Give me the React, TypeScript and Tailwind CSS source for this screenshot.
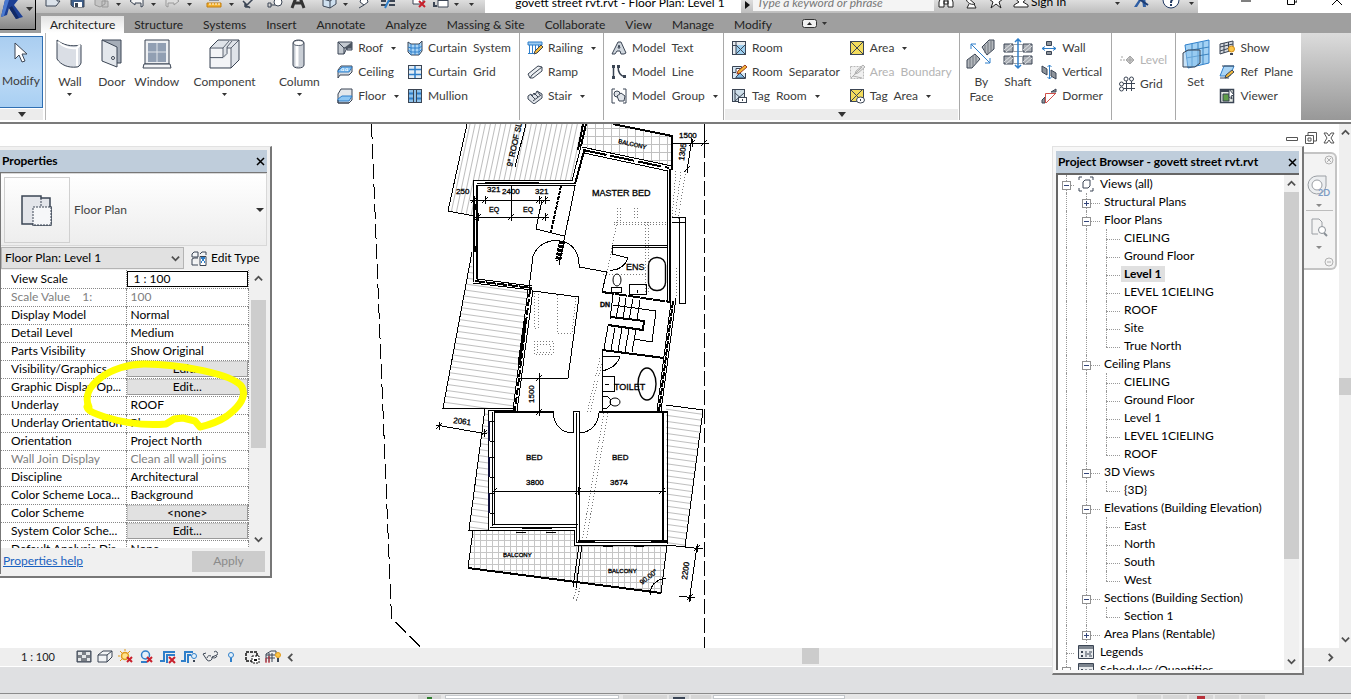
import React, { useState } from "react";

interface IconProps {
  name: string;
  size?: number;
}

const INK = "#3b4554";
const BLUE = "#2f7fca";

// 16x16 glyphs used by the small ribbon buttons and the bars
const icons: Record<string, React.ReactNode> = {
  roof: (
    <>
      <path d="M1 2h14v8H10v-2L7 14H1z" fill="#c3c9d0" stroke={INK} />
      <path d="M1 2l6 6h8M7 8v6" fill="none" stroke={INK} />
      <path d="M7 8h8V2z" fill="#4c5561" />
    </>
  ),
  ceiling: (
    <>
      <path d="M4 2h11v6l-3 3H3l-2 3V6z" fill="#d5dae0" stroke={INK} />
      <path d="M1 7l4-4h10l-3 5H1z" fill="#8ec6f2" stroke={BLUE} />
      <path d="M4 6h8M6 4v3M10 4v3" stroke="#fff" strokeDasharray="1 1" />
    </>
  ),
  floor: (
    <>
      <path d="M4 1h11v11l-3 3H1V6z" fill="#e3e7eb" stroke={INK} />
      <path d="M1 11l4-3h10l-3 5H1z" fill="#8ec6f2" stroke={BLUE} />
      <path d="M1 12v3h11l3-3" fill="none" stroke={INK} />
    </>
  ),
  curtainSystem: (
    <>
      <path d="M1 2l3 2h8l3-3v10l-3 4H4l-3-3z" fill="#a9d4f5" stroke={INK} />
      <path d="M4 4v11M12 4v11M8 4v11M1 7l3 1h8l3-2M1 10l3 2h8l3-3" fill="none" stroke={BLUE} />
    </>
  ),
  curtainGrid: (
    <>
      <rect x="1.5" y="1.5" width="13" height="13" fill="#e5edf4" stroke={INK} />
      <path d="M8 2v12M2 5.500h12M2 10.500h12" stroke={BLUE} strokeWidth="1.500" />
    </>
  ),
  mullion: (
    <>
      <rect x="1.5" y="1.5" width="13" height="13" fill="#8dc1ea" stroke={INK} />
      <path d="M6.500 1v14M9.500 1v14" stroke={INK} />
      <path d="M2 5.500h4M10 5.500h4M2 10.500h4M10 10.500h4" stroke={BLUE} strokeWidth="2" />
    </>
  ),
  railing: (
    <>
      <path d="M1 2h14v3H1z" fill="#9ccbf0" stroke={BLUE} />
      <path d="M2.500 5v8M5.500 5v8M8.500 5v8M11.500 5v3M1 13.500h6" stroke={BLUE} />
      <path d="M7 14l1-3 6-6 2 2-6 6z" fill="#f3b93a" stroke={INK} />
    </>
  ),
  ramp: (
    <>
      <path d="M1 10l10-8 4 1v4l-9 7H3z" fill="#eceff2" stroke={INK} />
      <path d="M3 14l2-3 10-8" fill="none" stroke={INK} />
    </>
  ),
  stair: (
    <>
      <path d="M1 8l3-2 1 2 2-3 1 2 2-4 5 3v4l-8 6-6-5z" fill="#dfe3e8" stroke={INK} />
      <path d="M4 7l4 4M7 5l4 4M10 3l3 4M6 13l8-6" stroke={INK} />
    </>
  ),
  modelText: (
    <>
      <path d="M1 14L7 2h3l5 11-2 1h-3l-1-3H6l-2 3z" fill="#cfd6dd" stroke={INK} />
      <path d="M7 8l1-3 1 3z" fill="#fff" stroke={INK} />
    </>
  ),
  modelLine: (
    <>
      <path d="M2.500 2v12M7 2c0 6 2 10 7 11" fill="none" stroke={INK} strokeWidth="1.500" />
      <path d="M1 1h3v3H1zM1 12h3v3H1zM6 1h3v3H6zM12 11h3v3h-3z" fill={INK} />
    </>
  ),
  modelGroup: (
    <>
      <path d="M4 1H1v14h3M12 1h3v14h-3" fill="none" stroke={INK} />
      <circle cx="6" cy="6" r="3" fill="#dfe3e8" stroke={INK} />
      <path d="M6 8l4-3 4 3-1 5H8z" fill="#dfe3e8" stroke={INK} />
    </>
  ),
  room: (
    <>
      <rect x="1.500" y="1.500" width="13" height="13" fill="#e6eaee" stroke={INK} />
      <path d="M5 5h9v9H5z" fill="#9fd0f0" />
      <path d="M5 1v13M1 5.500h4M5 5l9 9M14 5l-9 9" stroke={INK} />
    </>
  ),
  roomSeparator: (
    <>
      <path d="M1.500 2.500h9v2H5v4H1.500zM1.500 8v6.500h13V9" fill="#d6e7f4" stroke={INK} />
      <path d="M5 13l4-4 5 5H5z" fill="#7fb9e6" stroke={INK} />
      <path d="M6 10l1-3 7-6 2 2-7 6z" fill="#f3b93a" stroke="#a03a1c" />
    </>
  ),
  tagRoom: (
    <>
      <rect x="1.500" y="1.500" width="12" height="12" fill="#cfdfea" stroke={INK} />
      <path d="M4 1v12M4 5l9 8M13 5l-9 8" stroke={INK} />
      <rect x="7.500" y="9.500" width="8" height="5" fill="#fff" stroke={INK} />
      <path d="M11.500 11v2" stroke={INK} />
    </>
  ),
  area: (
    <>
      <rect x="1.500" y="1.500" width="13" height="13" fill="#f3dc5c" stroke={INK} />
      <path d="M1 1l14 14M15 1L1 15M4 1L1 4M12 15l3-3" stroke={INK} />
    </>
  ),
  areaBoundary: (
    <>
      <rect x="1.500" y="2.500" width="13" height="12" fill="#f0f0f0" stroke="#b8b8b8" strokeDasharray="2 1" />
      <path d="M2 14L13 3M6 10l1-3 7-6 2 2-7 6zM4 12l9 2" fill="#e4e4e4" stroke="#b0b0b0" />
    </>
  ),
  tagArea: (
    <>
      <rect x="1.500" y="1.500" width="13" height="12" fill="#f3dc5c" stroke={INK} />
      <path d="M1 1l13 13M14 1L1 14" stroke={INK} />
      <ellipse cx="11.500" cy="12" rx="4" ry="3" fill="#fff" stroke={INK} />
      <path d="M11.500 11v2" stroke={INK} />
    </>
  ),
  openWall: (
    <>
      <path d="M5.500 1.500h5v4h-5zM5.500 11.500h5v3h-5z" fill="#8f959c" stroke={INK} />
      <path d="M1 8.500h14M1 8.500l3-2M1 8.500l3 2M15 8.500l-3-2M15 8.500l-3 2" stroke={BLUE} />
    </>
  ),
  vertical: (
    <>
      <path d="M1 2l5 3v6L1 8zM10 6l5 3v6l-5-3z" fill="#8f959c" stroke={INK} />
      <path d="M8.500 1v14M6.500 3l2-2 2 2M6.500 13l2 2 2-2" fill="none" stroke={BLUE} />
    </>
  ),
  dormer: (
    <>
      <path d="M1 15v-3l3-3v6zM10 4l5-3v3z" fill="#8f959c" stroke={INK} />
      <path d="M4.500 15V5.500H15M5 15L14 6" fill="none" stroke="#d0504a" />
    </>
  ),
  level: (
    <>
      <path d="M1 8h6" stroke="#a5a5a5" strokeDasharray="2 1" />
      <path d="M11 4l4 4-4 4-4-4z" fill="#c9c9c9" stroke="#a5a5a5" />
      <path d="M11 4v8M7 8h8M3 4v2" stroke="#a5a5a5" />
    </>
  ),
  grid: (
    <>
      <path d="M7.500 5v10M12.500 5v10M4 7.500h12M4 12.500h12" stroke={INK} />
      <g fill="#fff" stroke={INK}>
        <circle cx="7" cy="3" r="2" />
        <circle cx="12.500" cy="3" r="2" />
        <circle cx="2.500" cy="8" r="2" />
        <circle cx="2.500" cy="13" r="2" />
      </g>
    </>
  ),
  show: (
    <>
      <path d="M1 4l13-3v9L1 14zM5 3v10M9.500 2v9M1 7l13-3M1 11l13-4" fill="#d5dae0" stroke={INK} />
      <circle cx="12.500" cy="9" r="3" fill="#fbc64a" stroke="#d08c1a" />
      <path d="M11 13h3v2h-3z" fill={INK} />
    </>
  ),
  refPlane: (
    <>
      <path d="M5 2h10l-4 10H1z" fill="#a9d4f5" stroke={BLUE} />
      <path d="M3 2h12M1 14h9" stroke={INK} />
      <path d="M6 14l1-3 6-5 2 2-6 5z" fill="#f3b93a" stroke={INK} />
    </>
  ),
  viewer: (
    <>
      <rect x="1.500" y="1.500" width="13" height="13" fill="#e8ece6" stroke={INK} strokeWidth="1.500" />
      <path d="M1 2h9v2H1z" fill={INK} />
      <path d="M4 6h6v7H4z" fill="#5f9e48" stroke={INK} />
      <path d="M10 1l5 6-3 1 1 3-3-2z" fill="#fff" stroke={INK} />
    </>
  ),
  open: <path d="M1 13V4h4l1 2h6v2h3l-4 5z" fill="#dbe2ea" stroke={INK} />,
  save: (
    <>
      <path d="M1 2h13v12H3l-2-2z" fill="#3f5f8a" stroke={INK} />
      <path d="M4 9h8v5H4z" fill="#fff" />
      <path d="M5 10h3v4H5z" fill={INK} />
    </>
  ),
  cloud: <path d="M2 12V6l5-3 5 2v6l-5 3zM9 8h6v6H9z" fill="#c5c5c5" stroke="#999" />,
  undo: <path d="M1 8l5-4v2h8v7l-2 1v-4H6v2z" fill="#f4f4f4" stroke={INK} />,
  redo: <path d="M15 8l-5-4v2H2v7l2 1v-4h6v2z" fill="#ddd" stroke="#999" />,
  measure: (
    <>
      <path d="M3 7h10v-4" stroke={INK} fill="none" />
      <path d="M1 10h14v4H1z" fill="#f5b32e" stroke="#c07c10" />
      <path d="M4 10v2M7 10v2M10 10v2M13 10v2" stroke="#fff" />
    </>
  ),
  dimension: <path d="M3 14L14 3M3 14v-4M3 14h4M1 8l7 7" fill="none" stroke={INK} strokeWidth="1.500" />,
  tag: (
    <>
      <path d="M1 10h3v4H1zM4 12h4" fill="none" stroke={INK} />
      <circle cx="11" cy="9" r="4" fill="#fff" stroke={INK} />
    </>
  ),
  letterA: <path d="M2 15L7 2h2l5 13M5 10h6" fill="none" stroke="#333" strokeWidth="3" />,
  box3d: <path d="M2 6l6-4 7 2v7l-6 4-7-2zM2 6l7 2v7M9 8l6-4" fill="#cfe0ef" stroke={INK} />,
  section: <path d="M4 9a4 4 0 1 1 8 0L8 12zM8 12l-5 3" fill="#fff" stroke={INK} />,
  thinLines: (
    <>
      <path d="M1 12h5M9 12h6M1 8h5M9 8h6" stroke={INK} strokeWidth="2" />
      <path d="M5 15l5-10" stroke={BLUE} strokeWidth="2" />
    </>
  ),
  closeHidden: (
    <>
      <path d="M2 3h10v8H2z" fill="#fff" stroke={INK} />
      <path d="M8 8l6 6M14 8l-6 6" stroke="#c8202c" strokeWidth="2" />
    </>
  ),
  switchWin: (
    <>
      <path d="M5 6h10v8H5z" fill="#fff" stroke={INK} />
      <path d="M5 7h10M1 9v4h3" stroke={INK} fill="none" strokeWidth="2" />
    </>
  ),
  binoculars: <path d="M1 14V9l2-5h3v10zM15 14V9l-2-5h-3v10zM6 8h4v3H6z" fill="#fff" stroke="#222" />,
  satellite: <path d="M3 3a7 7 0 0 0 9 8zM8 7l5-5M6 11l-2 4h9l-2-4" fill="#fff" stroke="#222" />,
  star: <path d="M8 1l2 5h5l-4 3 2 6-5-4-5 4 2-6-4-3h5z" fill="#fff" stroke="#222" />,
  person: <path d="M8 3a3 3 0 0 1 2 6l5 3v2H1v-2l5-3a3 3 0 0 1 2-6z" fill="#fff" stroke="#222" />,
  exchange: (
    <>
      <path d="M1 14L9 2h3l1 12h-3l-1-8-5 8z" fill="#2f5fa5" />
      <path d="M3 4l12 8" stroke="#1d3d74" strokeWidth="2" />
    </>
  ),
  detailLevel: (
    <>
      <path d="M1 2h14v11H1z" fill="#7b8087" stroke={INK} />
      <path d="M2 3h4v3H2zM10 3h4v3h-4zM6 6h4v3H6zM2 9h3v3H2zM11 9h3v3h-3z" fill="#e4e6e8" />
    </>
  ),
  visualStyle: <path d="M1 6l5-4h9v6l-5 5H1zM1 6h9v7M10 6l5-4" fill="#f1f3f5" stroke={INK} />,
  sunOff: (
    <>
      <circle cx="7" cy="7" r="3.500" fill="#ffe48a" stroke="#e09a1c" strokeWidth="1.500" />
      <path d="M7 0v2M0 7h2M2 2l2 2M12 2l-2 2M2 12l2-2" stroke="#e09a1c" />
      <path d="M9 8l5 5M14 8l-5 5" stroke="#c8202c" strokeWidth="2" />
    </>
  ),
  shadowOff: (
    <>
      <circle cx="6.500" cy="6" r="4" fill="#e4f1fb" stroke={BLUE} strokeWidth="1.500" />
      <path d="M2 13h6" stroke={BLUE} strokeWidth="2" />
      <path d="M8 8l5 5M13 8l-5 5" stroke="#c8202c" strokeWidth="2" />
    </>
  ),
  cropOff: (
    <>
      <path d="M0 12h4V3h11M7 14V6h8" fill="none" stroke={BLUE} strokeWidth="2" />
      <path d="M9 8l6 6M15 8l-6 6" stroke="#c8202c" strokeWidth="2" />
    </>
  ),
  cropShow: (
    <>
      <path d="M0 12h4V3h8M7 14V6h3" fill="none" stroke={BLUE} strokeWidth="2" />
      <circle cx="13" cy="7" r="2.500" fill="#e4f1fb" stroke={BLUE} />
      <path d="M12 11h2v2h-2z" fill={INK} />
    </>
  ),
  glasses: <path d="M1 5l4 6a3 3 0 0 0 5-3L15 6a2 2 0 0 0-3-3M1 5l3-1M5 9a3 3 0 0 1 4-2M10 8a3 3 0 0 0 5-1" fill="none" stroke={INK} />,
  bulb: (
    <>
      <circle cx="8" cy="6" r="2.500" fill="#e4f1fb" stroke={BLUE} />
      <path d="M7 9h2v4H7z" fill={BLUE} />
    </>
  ),
  worksharing: (
    <>
      <path d="M2 3h11v9H2z" fill="none" stroke="#111" strokeWidth="1.500" strokeDasharray="3 1" />
      <path d="M8 7h7v7H8z" fill="#fff" stroke="#111" strokeDasharray="2 1" />
      <path d="M10 10h3v2h-3z" fill="#111" />
    </>
  ),
  analytical: (
    <>
      <path d="M1 13V5l5-3h5v3M1 6h9M4 13V4M7 13V4M1 9h9" fill="none" stroke={INK} />
      <path d="M4 7v7M1 9v5" stroke="#c8202c" />
      <circle cx="13" cy="6" r="2.500" fill="#fbc64a" stroke="#e09a1c" />
      <path d="M12 9h2v4h-2z" fill={INK} />
    </>
  ),
  views: (
    <>
      <path d="M4 1H1v3M12 1h3v3M1 12v3h3M15 12v3h-3" fill="none" stroke={INK} />
      <path d="M5 6l2-2h5v6l-2 2H5z" fill="#fff" stroke={INK} />
    </>
  ),
  legends: (
    <>
      <path d="M.5 1.500h15v13H.5z" fill="#e8ebee" stroke={INK} />
      <path d="M1 2h14v3H1z" fill="#7d858f" />
      <path d="M3 7h2v2H3zM3 11h2v2H3z" fill={INK} />
      <path d="M7 8h2M11 8h3M7 10h6M7 12h2M11 12h3" stroke={INK} />
    </>
  ),
  editType: (
    <>
      <path d="M1 4l2-2h4v5H1zM9 4l2-2h4v3M1 9l2-1h4M1 9v6h6" fill="#f4f6f8" stroke={INK} />
      <path d="M9 6.500h6v9H9z" fill="#fff" stroke={INK} />
      <path d="M10 8h4M10 12h1M13 12h1M11 10h2" stroke={BLUE} strokeWidth="2" />
    </>
  ),
};

function Icon({ name, size = 16 }: IconProps) {
  return (
    <svg width={size} height={size} viewBox="0 0 16 16" className="shrink-0" aria-hidden="true">
      {icons[name]}
    </svg>
  );
}

// 32x32 glyphs
const bigIcons: Record<string, React.ReactNode> = {
  cursor: <path d="M10 6v16l4-4 3 7 3-1-3-7h5z" fill="#fff" stroke={INK} />,
  wall: (
    <>
      <path d="M3 2c6 5 14 7 24 5v18c-1 3-3 4-4 4C14 30 7 27 3 21z" fill="#dadee5" stroke={INK} />
      <path d="M4 4c6 5 13 7 19 6v18M23 10l3-3" fill="none" stroke="#fff" strokeWidth="2" />
    </>
  ),
  door: (
    <>
      <path d="M6 2h19v23h-4" fill="#a5adb8" stroke={INK} />
      <path d="M6 2l15 7v20L6 23z" fill="#e3e7ec" stroke={INK} />
      <circle cx="17" cy="20" r="1.500" fill="#fff" stroke={INK} />
    </>
  ),
  window: (
    <>
      <path d="M4 2h24v24H4z" fill="#eef0f3" stroke={INK} />
      <path d="M7 5h18v19H7z" fill="#919fb3" />
      <path d="M16 5v19M7 14h18" stroke="#dfe4ea" />
      <path d="M3 26h26l1 4H2z" fill="#f5f6f8" stroke={INK} />
    </>
  ),
  component: (
    <>
      <path d="M1 10l8-8h21v20l-8 8H1z" fill="#dfe3e9" stroke={INK} />
      <path d="M2 11h12v8H2zM2 21h12l5-5v-6h3v19H2z" fill="#f3f4f7" />
      <path d="M1 19.500h13l4-4V9l5-6M14 10v9M1 10h13l6-7M22 10v20M22 10l8-8M18 10h4" fill="none" stroke={INK} strokeWidth=".8" />
    </>
  ),
  column: (
    <>
      <path d="M10 5c0-4 11-4 11 0v22c0 4-11 4-11 0z" fill="#c9ced5" stroke={INK} />
      <path d="M14 8v20" stroke="#fff" strokeWidth="3" />
      <ellipse cx="15.500" cy="5" rx="5" ry="2.500" fill="#fff" stroke={INK} strokeWidth=".8" />
    </>
  ),
  byFace: (
    <>
      <path d="M2 22l8-6 5 5-8 9H2zM17 9l7-7h5v9l-7 6z" fill="#b4b8bd" stroke={INK} />
      <path d="M5 20v10M8 18v11M11 17v8M20 7v8M23 4v12M26 3v10" stroke="#70767e" />
      <path d="M6 6l19 19M6 6v5M6 6h5M25 25v-5M25 25h-5" fill="none" stroke={BLUE} />
    </>
  ),
  shaft: (
    <>
      <path d="M2 6h9v8H2zM21 6h9v8h-9zM2 18h9v8H2zM21 18h9v8h-9z" fill="#a9adb3" stroke={INK} />
      <path d="M2 12l7-6M4 14l7-6M21 12l7-6M23 14l7-6M2 24l7-6M4 26l7-6M21 24l7-6M23 26l7-6" stroke="#dfe2e5" />
      <path d="M11 6.500h10M11 13.500h10M11 18.500h10M11 25.500h10" stroke="#9aa0a7" />
      <path d="M16 1v29M13 4l3-3 3 3M13 27l3 3 3-3" fill="none" stroke={BLUE} strokeWidth="1.500" />
    </>
  ),
  set: (
    <>
      <path d="M5 7l24-5v23L8 30z" fill="#a3d2f5" stroke={BLUE} />
      <path d="M12 6v23M18 5v22M23 4v22M6 13l23-4M6 20l23-4" stroke="#3b83bf" />
      <path d="M3 15l5-3h12v13l-5 4H3z" fill="#8ec4ee" fillOpacity=".5" stroke={INK} />
    </>
  ),
};

function Caret() {
  return (
    <svg width="5" height="3" viewBox="0 0 5 3" className="shrink-0" aria-hidden="true">
      <path d="M0 0h5L2.500 3z" fill="#333" />
    </svg>
  );
}

function Chevron({ dir, size = 9 }: { dir: "up" | "down" | "left" | "right"; size?: number }) {
  const d = {
    up: "M1 7l4-4 4 4",
    down: "M1 3l4 4 4-4",
    left: "M7 1L3 5l4 4",
    right: "M3 1l4 4-4 4",
  }[dir];
  return (
    <svg width={size} height={size} viewBox="0 0 10 10" aria-hidden="true">
      <path d={d} fill="none" stroke="#505050" strokeWidth="2" />
    </svg>
  );
}

function BigButton({ icon, label, width, caret }: { icon: string; label: string; width: string; caret?: boolean }) {
  return (
    <button className={`flex flex-col items-center ${width}`}>
      <svg width="32" height="32" viewBox="0 0 32 32" aria-hidden="true">
        {bigIcons[icon]}
      </svg>
      <span className="mt-1 leading-[15px] whitespace-pre-line">{label}</span>
      {caret && <span className="mt-1"><Caret /></span>}
    </button>
  );
}

function SmallButton({ icon, label, caret, disabled }: { icon: string; label: string; caret?: boolean; disabled?: boolean }) {
  return (
    <button disabled={disabled} className="flex h-6 items-center text-left whitespace-pre disabled:text-[#b4b4b4]">
      <Icon name={icon} />
      <span className="ml-[5px] mr-2">{label}</span>
      {caret && <Caret />}
    </button>
  );
}

const tabs = [
  "Architecture", "Structure", "Systems", "Insert", "Annotate", "Analyze",
  "Massing & Site", "Collaborate", "View", "Manage", "Modify",
];

const quickAccess: [string, string][] = [
  ["open", "w-[25px]"], ["save", "w-[23px]"], ["cloud", "w-[23px]"], ["caret", "w-[13px]"],
  ["undo", "w-[22px]"], ["caret", "w-[13px]"], ["redo", "w-[23px]"], ["caret", "w-[19px]"],
  ["measure", "w-[23px]"], ["caret", "w-[13px]"], ["dimension", "w-[25px]"], ["tag", "w-[23px]"],
  ["letterA", "w-[31px]"], ["box3d", "w-[22px]"], ["caret", "w-[13px]"], ["section", "w-[24px]"],
  ["thinLines", "w-[31px]"], ["closeHidden", "w-[22px]"], ["switchWin", "w-[21px]"], ["caret", "w-[15px]"],
  ["caret", "w-[8px]"],
];

function Header() {
  const [active, setActive] = useState("Architecture");
  return (
    <header className="flex h-[33px] shrink-0 bg-[#9f9f9f]">
      <button aria-label="Application menu" className="flex h-[30px] w-9 shrink-0 items-end border-r border-b border-black bg-linear-to-b from-[#d0d0d0] to-[#858585]">
        <svg width="35" height="29" viewBox="0 0 35 29" aria-hidden="true">
          <path d="M5 0L1 17l6-2 2-7 7 11 7-2-9-12 4-5z" fill="#1c3f94" />
          <path d="M5 0L1 17l3-1L9 0z" fill="#4a79cf" />
          <path d="M9 8l7 11 3-1L12 6z" fill="#122a66" />
          <path d="M26 7h7l-3.500 4z" fill="#333" />
        </svg>
      </button>
      <div className="flex min-w-0 flex-1 flex-col">
        <div className="flex h-[13px] items-end overflow-hidden bg-linear-to-b from-[#dedede] to-[#bdbdbd]">
          <div className="flex h-full w-[449px] shrink-0 items-end pb-1 pl-[9px]">
            {quickAccess.map(([name, width], i) => (
              <button key={i} aria-label={name} className={`flex shrink-0 ${width} ${name === "caret" ? "pb-[3px]" : ""}`}>
                {name === "caret" ? <Caret /> : <Icon name={name} />}
              </button>
            ))}
          </div>
          <h1 className="flex h-full w-[256px] shrink-0 items-end justify-center bg-white pb-[2px] pl-[14px] text-xs leading-4 text-black">
            govett street rvt.rvt - Floor Plan: Level 1
          </h1>
          <div className="flex h-full min-w-0 flex-1 items-end">
            <span className="pb-1 pl-1">
              <svg width="6" height="8" viewBox="0 0 6 8" aria-hidden="true"><path d="M0 0l5 4-5 4z" fill="#111" /></svg>
            </span>
            <input
              aria-label="Search"
              placeholder="Type a keyword or phrase"
              className="mb-[2px] ml-[2px] h-[18px] w-[181px] bg-[#f4f4f4] px-1 text-xs italic placeholder:text-[#777]"
            />
            <div className="ml-1 flex items-end gap-[9px] pb-1">
              <Icon name="binoculars" />
              <Icon name="satellite" />
              <Icon name="star" />
              <Icon name="person" />
            </div>
            <button className="ml-[2px] pb-[3px] text-xs leading-4 text-black">Sign In</button>
            <div className="ml-auto flex items-end gap-[13px] pr-1 pb-1">
              <span className="pb-1"><Caret /></span>
              <Icon name="exchange" />
              <svg width="18" height="18" viewBox="0 0 18 18" aria-hidden="true">
                <circle cx="9" cy="9" r="8" fill="#fff" stroke="#223a63" />
                <path d="M6 6c1-4 7-2 5 2-1 1-2 1-2 4M9 13v2" fill="none" stroke="#223a63" strokeWidth="2" />
              </svg>
              <span className="-ml-1 pb-1"><Caret /></span>
            </div>
          </div>
          <div className="flex h-full w-[153px] shrink-0 items-end justify-between bg-white pr-[9px] pb-2 pl-[43px]">
            <svg width="10" height="10" viewBox="0 0 10 10" aria-label="Minimize"><path d="M0 6h10" stroke="#000" /></svg>
            <svg width="10" height="10" viewBox="0 0 10 10" aria-label="Restore"><path d="M.5 2.500h7v7h-7zM3 2V0h7v7H8" fill="none" stroke="#000" /></svg>
            <svg width="10" height="10" viewBox="0 0 10 10" aria-label="Close"><path d="M0 0l10 10M10 0L0 10" stroke="#000" /></svg>
          </div>
        </div>
        <nav className="flex flex-1 items-end pl-[5px]">
          {tabs.map((tab) => (
            <button
              key={tab}
              onClick={() => setActive(tab)}
              className={`h-[17px] shrink-0 px-[10px] text-xs leading-[15px] text-[#222] first:px-[9px] ${
                tab === active ? "bg-linear-to-b from-[#e2e2e2] to-white" : ""
              }`}
            >
              {tab}
            </button>
          ))}
          <button aria-label="Minimize ribbon" className="mb-[5px] ml-5 flex items-center gap-[5px]">
            <svg width="15" height="9" viewBox="0 0 15 9" aria-hidden="true">
              <rect x=".5" y=".5" width="14" height="8" rx="2" fill="#f0f0f0" stroke="#333" />
              <path d="M5 6l2.500-3L10 6z" fill="#222" />
            </svg>
            <Caret />
          </button>
        </nav>
      </div>
    </header>
  );
}

function Ribbon() {
  return (
    <div className="flex h-[91px] shrink-0 border-b-2 border-[#7b7b7b] bg-white pb-[2px] text-xs text-[#3c3c3c]">
      <div className="flex w-[46px] shrink-0 flex-col border-r border-[#b5b5b5] pr-[2px]">
        <button className="mt-[3px] flex h-[72px] flex-col items-center border border-l-0 border-[#2f6fb3] bg-linear-to-b from-[#a9cdf0] via-[#bedbf6] to-[#a8cff3]">
          <svg width="32" height="32" viewBox="0 0 32 32" aria-hidden="true">{bigIcons.cursor}</svg>
          <span className="mt-1 leading-[15px]">Modify</span>
        </button>
        <div className="mt-[1px] flex flex-1 items-center justify-center bg-[#ececec]">
          <svg width="8" height="5" viewBox="0 0 8 5" aria-hidden="true"><path d="M0 0h8L4 5z" fill="#333" /></svg>
        </div>
      </div>

      <div className="flex w-[474px] shrink-0 border-r border-[#a9a9a9] pt-[5px] pl-1">
        <BigButton icon="wall" label="Wall" width="w-10" caret />
        <BigButton icon="door" label="Door" width="w-11" />
        <BigButton icon="window" label="Window" width="w-[46px]" />
        <BigButton icon="component" label="Component" width="w-[90px]" caret />
        <BigButton icon="column" label="Column" width="w-[60px]" caret />
        <div className="-mt-[2px] ml-2 flex w-[70px] flex-col">
          <SmallButton icon="roof" label="Roof" caret />
          <SmallButton icon="ceiling" label="Ceiling" />
          <SmallButton icon="floor" label="Floor" caret />
        </div>
        <div className="-mt-[2px] flex flex-col">
          <SmallButton icon="curtainSystem" label="Curtain  System" />
          <SmallButton icon="curtainGrid" label="Curtain  Grid" />
          <SmallButton icon="mullion" label="Mullion" />
        </div>
      </div>

      <div className="w-[84px] shrink-0 border-r border-[#a9a9a9] pt-[3px] pl-[7px]">
        <SmallButton icon="railing" label="Railing" caret />
        <SmallButton icon="ramp" label="Ramp" />
        <SmallButton icon="stair" label="Stair" caret />
      </div>

      <div className="w-[120px] shrink-0 border-r border-[#a9a9a9] pt-[3px] pl-[7px]">
        <SmallButton icon="modelText" label="Model  Text" />
        <SmallButton icon="modelLine" label="Model  Line" />
        <SmallButton icon="modelGroup" label="Model  Group" caret />
      </div>

      <div className="flex w-[236px] shrink-0 flex-col border-r border-[#a9a9a9] px-[1px] pt-[3px]">
        <div className="flex pl-[6px]">
          <div className="w-[119px]">
            <SmallButton icon="room" label="Room" />
            <SmallButton icon="roomSeparator" label="Room  Separator" />
            <SmallButton icon="tagRoom" label="Tag  Room" caret />
          </div>
          <div className="-ml-[1px] pl-[2px]">
            <SmallButton icon="area" label="Area" caret />
            <SmallButton icon="areaBoundary" label="Area  Boundary" disabled />
            <SmallButton icon="tagArea" label="Tag  Area" caret />
          </div>
        </div>
        <div className="mt-[1px] flex flex-1 items-center justify-center bg-[#ececec]">
          <svg width="8" height="5" viewBox="0 0 8 5" aria-hidden="true"><path d="M0 0h8L4 5z" fill="#333" /></svg>
        </div>
      </div>

      <div className="flex w-[152px] shrink-0 items-start border-r border-[#a9a9a9] pt-[5px] pl-1">
        <BigButton icon="byFace" label={"By\nFace"} width="w-9" />
        <BigButton icon="shaft" label="Shaft" width="w-10" />
        <div className="-mt-[2px] ml-1">
          <SmallButton icon="openWall" label="Wall" />
          <SmallButton icon="vertical" label="Vertical" />
          <SmallButton icon="dormer" label="Dormer" />
        </div>
      </div>

      <div className="w-16 shrink-0 border-r border-[#a9a9a9] pt-[15px] pl-[7px]">
        <SmallButton icon="level" label="Level" disabled />
        <SmallButton icon="grid" label="Grid" />
      </div>

      <div className="flex w-[125px] shrink-0 items-start pt-[5px]">
        <BigButton icon="set" label="Set" width="w-[42px]" />
        <div className="-mt-[2px] ml-1">
          <SmallButton icon="show" label="Show" />
          <SmallButton icon="refPlane" label="Ref  Plane" />
          <SmallButton icon="viewer" label="Viewer" />
        </div>
      </div>
      <div className="flex-1 bg-linear-to-b from-[#dcdcdc] to-[#989898]" />
    </div>
  );
}

// Dimension tick: short slash across a cross mark
function Tick({ x, y }: { x: number; y: number }) {
  return <path d={`M${x - 3} ${y + 3}l6-6M${x} ${y - 4}v8`} strokeWidth="1" />;
}

function FloorPlanDrawing() {
  return (
    <svg width="360" height="524" viewBox="360 124 360 524" className="ml-[360px] block shrink-0" role="img" aria-label="Level 1 floor plan">
      <defs>
        <pattern id="steep" width="5" height="5" patternUnits="userSpaceOnUse" patternTransform="rotate(12)">
          <path d="M.5 0v5" stroke="#bdbdbd" />
        </pattern>
        <pattern id="shallow" width="6" height="6" patternUnits="userSpaceOnUse" patternTransform="rotate(8)">
          <path d="M0 .5h6" stroke="#bfbfbf" />
        </pattern>
        <pattern id="tiles" width="8" height="8" patternUnits="userSpaceOnUse" x="3">
          <path d="M.5 0v8M0 .5h8" stroke="#c0c0c0" />
        </pattern>
        <pattern id="tilesSmall" width="6" height="6" patternUnits="userSpaceOnUse">
          <path d="M.5 0v6M0 .5h6" stroke="#c6c6c6" />
        </pattern>
      </defs>

      {/* roofs and balconies */}
      <g stroke="none">
        <path d="M467 124h119l-12 56H473v36l-25-5z" fill="url(#steep)" />
        <path d="M471 255l3 27 56 7-17 119h-70z" fill="url(#shallow)" />
        <path d="M485 409h4v121h-20z" fill="url(#shallow)" />
        <path d="M666 405l37 5-18 137-18-3z" fill="url(#shallow)" />
        <path d="M586 124h28l58 12v30l-90-20z" fill="url(#tiles)" />
        <path d="M473 530h101v15h93l-6 48-193-25z" fill="url(#tilesSmall)" />
      </g>

      {/* underlay */}
      <g fill="none" stroke="#7a7a7a" strokeDasharray="1 2" shapeRendering="crispEdges">
        <path d="M534 293v35h4v-35M557 295v38h15l4-36M534 341h19v13h-19zM537 344h13v8h-13z" />
        <path d="M617 208v14M620 208v14M634 208v12M637 208v12M614 222h53M614 224h53M617 222l-11 56M645 222v70M648 222v70M603 274h45" />
        <path d="M676 171l-4 48M686 171l-8 48M681 172l-6 44M603 358l-13 55M600 358l-13 55M608 413l-22 128M604 413l-22 128" />
        <path d="M676 268v28M679 270v26M580 588l-4 14M577 586l-4 14" />
      </g>

      <g fill="none" stroke="#000" shapeRendering="crispEdges">
        {/* property boundary */}
        <path d="M371.500 124l9 226 11 268 30 30" strokeDasharray="15 5" />
        <path d="M704.500 124v524" strokeDasharray="15 4" />

        {/* roof outlines */}
        <path d="M467 124l-19 87 26 5M472 252l-29 156h70M485 409l-16 121h20M666 405l37 5-18 137" />
        <path d="M526 124l-11 43" />

        {/* top balcony */}
        <path d="M586 124l-5 22M583 124l-5 26M613 124l59 12v34" strokeWidth="2" />
        <path d="M582 147l90 19M584 153l84 18" />
        <path d="M583 150l86 18" strokeWidth="2" strokeDasharray="24 4" />

        {/* study walls */}
        <path d="M473.500 282V180.500h98.500l9-34" />
        <path d="M477 279V185M575 184l9-33" strokeWidth="2" />
        <path d="M476.500 183.500h99M478 185.500h98M473 283l59 7M477 279l55 7" />
        <path d="M475 281l57 7" strokeWidth="2" strokeDasharray="10 1" />
        <path d="M475.500 204v48" strokeWidth="4" />
        <path d="M475.500 210v36" stroke="#fff" strokeWidth="1" />
        <path d="M485 182.500h54" />
        <path d="M542 200l-6 29 28 7M575 186l-16 79" />
        <path d="M561 186l-10 46" strokeWidth="2" strokeDasharray="4 1" />
        <path d="M562 241l-4 20" strokeWidth="6" strokeDasharray="3 1" />
        <path d="M533 256c5-12 16-17 27-15 12 1 20 12 19 26l28 5M533 256l-4 32" />

        {/* east wall */}
        <path d="M667.500 170v131M672 217h13v86h-6V217M672 222h13" />
        <path d="M670 169v133" strokeWidth="2" />

        {/* ensuite */}
        <path d="M612 245.500h55M612 247.500h55M612 246v8l16 4c-3 8-10 13-18 12M607 271l-5 21" />
        <path d="M602 292l68 10" strokeWidth="2" strokeDasharray="12 1" />
        <path d="M629 284h17v10h-17zM637 290v3M611 287h10v5h-10z" strokeWidth="1" />

        {/* stair */}
        <path d="M613 295l-3 24M620 297l-4 22M626 298l-3 21M633 299l-4 21M640 300l-3 20M608 326l-4 23M615 328l-4 22M622 328l-4 23M629 329l-4 23M636 330l-4 22" />
        <path d="M611 317l33 4-1 9-35-5" strokeWidth="2" />
        <path d="M613 305l43 6-4 31-18-3M602 349v7h15" />
        <path d="M602 350l62 8" strokeWidth="2" />
        <path d="M676 298l-15 113M671 302l-14 109" />
        <path d="M673 301l-14 110" strokeWidth="2" strokeDasharray="7 1" />

        {/* living void and west wall */}
        <path d="M533 291l46 6-11 81h-50M533 290l-16 121M528 290l-15 120" />
        <path d="M530 290l-15 120" strokeWidth="2" strokeDasharray="7 2" />
        <path d="M525 321l-6 44" strokeWidth="3" />

        {/* toilet */}
        <path d="M602.500 353v58M602 356h18c-2 8-9 13-18 15" />
        <path d="M602 396h5l3 3v6l-3 3h-5" />
        <path d="M602 376h12v15h-12zM605 384h4" strokeWidth="1" />

        {/* bedrooms */}
        <path d="M488.500 530V410.500H516M492.500 526V412" />
        <path d="M494.500 525V412M574 411.500h5v129M573.500 411v22M576.500 413v127" />
        <path d="M494 412h60M599 412h68" strokeWidth="2" />
        <path d="M553 413c1 12 9 20 20 20M599 413c-1 11-8 19-19 20" />
        <path d="M667.500 411v133" />
        <path d="M663 412v130" strokeWidth="2" />
        <path d="M488 530.500h86v15h93M490 527.500h86v15h90M493 524.500h85M578 540.500h89" />
        <path d="M522 528h30M578 542h17M651 542h16" strokeWidth="2" />
        <path d="M489 421v20M489 457v20M489 493v20" stroke="#10103a" strokeWidth="2" />
        <path d="M490 441h5M490 457h5M490 477h5M490 493h5M490 513h5M490 421h5" />

        {/* lower balconies */}
        <path d="M473 530l-5 38M667 545l-6 48" />
        <path d="M468 568l193 25" strokeWidth="2" />
        <path d="M582 545l-6 43M579 545l-6 42" />
        <path d="M516 532.500h10M546 532.500h10M603 546.500h10M634 546.500h10M650 595c0-9 5-15 16-17" />

        {/* dimension lines */}
        <path d="M470 200.500h80M475 217.500h74M511.500 186v35" />
        <path d="M672 143.500h37M692 138l-5 33" />
        <path d="M539.500 373v42M494 491.500h172" />
        <path d="M436 425l51 9M667 545l36 4M697 546l-8 56M679 596l16 2" />
        <Tick x={474} y={200} />
        <Tick x={485} y={200} />
        <Tick x={539} y={200} />
        <Tick x={545} y={200} />
        <Tick x={478} y={217} />
        <Tick x={511} y={217} />
        <Tick x={545} y={217} />
        <Tick x={692} y={143} />
        <Tick x={704} y={143} />
        <Tick x={687} y={169} />
        <Tick x={539} y={378} />
        <Tick x={539} y={412} />
        <Tick x={494} y={491} />
        <Tick x={578} y={491} />
        <Tick x={662} y={491} />
        <Tick x={439} y={426} />
        <Tick x={484} y={433} />
        <Tick x={697} y={548} />
        <Tick x={690} y={597} />
      </g>

      {/* fixtures */}
      <g fill="none" stroke="#000">
        <rect x="648.500" y="257.500" width="17" height="33" rx="8" strokeWidth="1.400" />
        <ellipse cx="617" cy="280" rx="4" ry="6" />
        <ellipse cx="615" cy="402" rx="5" ry="4" />
        <ellipse cx="647" cy="384" rx="9" ry="16" strokeWidth="1.400" />
      </g>

      <g fontFamily="Liberation Sans, Arial, sans-serif" fontSize="8" fill="#000" stroke="#000" strokeWidth=".3">
        <text x="592" y="196" fontSize="9">MASTER BED</text>
        <text x="626" y="270" fontSize="9">ENS</text>
        <text x="614" y="390" fontSize="9">TOILET</text>
        <text x="526" y="460">BED</text>
        <text x="612" y="460">BED</text>
        <text x="526" y="485">3800</text>
        <text x="610" y="485">3674</text>
        <text x="456" y="194">250</text>
        <text x="487" y="192">321</text>
        <text x="502" y="194">2400</text>
        <text x="535" y="194">321</text>
        <text x="489" y="212" fontSize="7">EQ</text>
        <text x="523" y="212" fontSize="7">EQ</text>
        <text x="679" y="138">1500</text>
        <text x="600" y="307" fontSize="7" fontWeight="bold">DN</text>
        <text x="503" y="557" fontSize="6">BALCONY</text>
        <text x="608" y="573" fontSize="6">BALCONY</text>
        <text transform="translate(618 143) rotate(13)" fontSize="6">BALCONY</text>
        <text transform="translate(512 167) rotate(-77)">9° ROOF SLOPE</text>
        <text transform="translate(684 161) rotate(-82)">1305</text>
        <text transform="translate(534 403) rotate(-90)">1500</text>
        <text transform="translate(453 423) rotate(7)">2061</text>
        <text transform="translate(687 580) rotate(-82)">2200</text>
        <text transform="translate(642 585) rotate(-38)" fontSize="7">90.00°</text>
      </g>
    </svg>
  );
}

interface Property {
  name: string;
  value: string;
  kind?: "input" | "button" | "muted";
}

const properties: Property[] = [
  { name: "View Scale", value: "1 : 100", kind: "input" },
  { name: "Scale Value    1:", value: "100", kind: "muted" },
  { name: "Display Model", value: "Normal" },
  { name: "Detail Level", value: "Medium" },
  { name: "Parts Visibility", value: "Show Original" },
  { name: "Visibility/Graphics", value: "Edit...", kind: "button" },
  { name: "Graphic Display Op...", value: "Edit...", kind: "button" },
  { name: "Underlay", value: "ROOF" },
  { name: "Underlay Orientation", value: "Plan" },
  { name: "Orientation", value: "Project North" },
  { name: "Wall Join Display", value: "Clean all wall joins", kind: "muted" },
  { name: "Discipline", value: "Architectural" },
  { name: "Color Scheme Loca...", value: "Background" },
  { name: "Color Scheme", value: "<none>", kind: "button" },
  { name: "System Color Sche...", value: "Edit...", kind: "button" },
  { name: "Default Analysis Dis...", value: "None" },
];

function PaletteTitle({ title }: { title: string }) {
  return (
    <div className="flex h-[22px] shrink-0 items-center justify-between bg-[#bfcddb] pr-[2px] pl-[2px]">
      <h2 className="font-bold">{title}</h2>
      <button aria-label={`Close ${title}`}>
        <svg width="9" height="9" viewBox="0 0 9 9" aria-hidden="true">
          <path d="M1 1l7 7M8 1L1 8" stroke="#000" strokeWidth="1.500" />
        </svg>
      </button>
    </div>
  );
}

function PropertiesPalette() {
  const [scale, setScale] = useState("1 : 100");
  return (
    <section className="absolute top-[22px] left-0 flex h-[432px] w-[272px] flex-col border-t border-r-2 border-b-2 border-t-[#e2e2e2] border-r-[#777] border-b-[#777] bg-[#f0f0f0] pt-[3px] pr-[3px] pb-[2px] text-xs text-black">
      <PaletteTitle title="Properties" />
      <div className="flex min-h-0 flex-1 flex-col border-t border-l border-[#777]">
        <button className="flex h-[73px] w-[266px] shrink-0 items-center border border-l-0 border-[#d8d8d8] bg-linear-to-b from-white to-[#ededed] pr-[2px] pl-[3px] text-[#444]">
          <span className="flex h-[66px] w-[66px] items-center justify-center border border-[#d0d0d0]">
            <svg width="34" height="34" viewBox="0 0 34 34" aria-hidden="true">
              <path d="M2 3h19v2h9v9h1v18H13v-1H2z" fill="#e3e5ea" stroke={INK} strokeWidth="1.500" />
              <path d="M13 14h18v18H13z" fill="#f6f7f9" stroke={INK} strokeDasharray="2 1" />
              <path d="M21 5v9" stroke={INK} strokeDasharray="2 1" />
            </svg>
          </span>
          <span className="ml-1">Floor Plan</span>
          <span className="ml-auto">
            <svg width="8" height="4" viewBox="0 0 8 4" aria-hidden="true"><path d="M0 0h8L4 4z" fill="#333" /></svg>
          </span>
        </button>

        <div className="flex h-6 shrink-0 items-center">
          <div className="relative">
            <select aria-label="View" className="block h-[22px] w-[183px] appearance-none border border-[#b4b4b4] bg-[#e1e1e1] pl-[3px]">
              <option>Floor Plan: Level 1</option>
            </select>
            <span className="pointer-events-none absolute top-[7px] right-1">
              <Chevron dir="down" />
            </span>
          </div>
          <button className="ml-[7px] flex items-center gap-1">
            <Icon name="editType" />
            Edit Type
          </button>
        </div>

        <div className="flex min-h-0 flex-1 overflow-hidden">
          <div className="w-[248px] overflow-hidden bg-white">
            <table className="w-full table-fixed border-collapse">
              <tbody>
                {properties.map((p) => (
                  <tr key={p.name} className={`h-[18px] border-b border-dotted border-[#888] ${p.kind === "muted" ? "text-[#808080]" : ""}`}>
                    <th scope="row" className="w-[125px] overflow-hidden border-r border-dotted border-[#888] p-0 pl-[10px] text-left leading-4 font-normal whitespace-pre">
                      {p.name}
                    </th>
                    <td className="border-r border-dotted border-[#888] p-0 leading-4">
                      {p.kind === "input" && (
                        <input
                          aria-label={p.name}
                          value={scale}
                          onChange={(e) => setScale(e.target.value)}
                          className="block h-4 w-full border border-black pl-[6px]"
                        />
                      )}
                      {p.kind === "button" && (
                        <button className="block h-4 w-full border border-t-[#c8c8c8] border-r-[#9a9a9a] border-b-[#9a9a9a] border-l-[#c8c8c8] bg-[#e1e1e1] leading-[14px]">
                          {p.value}
                        </button>
                      )}
                      {(!p.kind || p.kind === "muted") && <span className="pl-1">{p.value}</span>}
                    </td>
                  </tr>
                ))}
              </tbody>
            </table>
          </div>
          <div className="ml-[2px] flex w-[15px] flex-col items-center pt-1">
            <Chevron dir="up" />
            <div className="mt-[17px] h-[148px] w-full bg-[#cdcdcd]" />
            <div className="mt-auto mb-1"><Chevron dir="down" /></div>
          </div>
        </div>

        <div className="flex h-[26px] shrink-0 items-center justify-between pr-[2px] pl-[2px]">
          <a href="#help" className="text-[#1a62c0] underline">Properties help</a>
          <button disabled className="h-[21px] w-[73px] bg-[#cccccc] text-[#8a8a8a]">Apply</button>
        </div>
      </div>

      {/* highlighter markup */}
      <svg width="172" height="76" viewBox="80 356 172 76" className="pointer-events-none absolute top-[209px] left-[80px]" aria-hidden="true">
        <path
          d="M89 407C79 386 112 364 144 364c35 0 90 10 98 23 5 10-3 20-15 29-9 6-18 9-27 11l-5-6-12-3-9 1-8 5c-24 2-45-2-61-7-12-4-17-6-18-10z"
          fill="none"
          stroke="#ffff00"
          strokeWidth="7"
          strokeLinejoin="round"
        />
      </svg>
    </section>
  );
}

type Guide = "none" | "line" | "leaf" | "last" | "plus" | "minus";

interface TreeRow {
  guides: Guide[];
  label: string;
  icon?: string;
  active?: boolean;
}

function leaves(names: string[]): TreeRow[] {
  return names.map((label, i) => ({
    guides: ["line", "line", i === names.length - 1 ? "last" : "leaf"],
    label,
    active: label === "Level 1" && names.length > 5,
  }));
}

const tree: TreeRow[] = [
  { guides: ["minus"], label: "Views (all)", icon: "views" },
  { guides: ["line", "plus"], label: "Structural Plans" },
  { guides: ["line", "minus"], label: "Floor Plans" },
  ...leaves(["CIELING", "Ground Floor", "Level 1", "LEVEL 1CIELING", "ROOF", "Site", "True North"]),
  { guides: ["line", "minus"], label: "Ceiling Plans" },
  ...leaves(["CIELING", "Ground Floor", "Level 1", "LEVEL 1CIELING", "ROOF"]),
  { guides: ["line", "minus"], label: "3D Views" },
  ...leaves(["{3D}"]),
  { guides: ["line", "minus"], label: "Elevations (Building Elevation)" },
  ...leaves(["East", "North", "South", "West"]),
  { guides: ["line", "minus"], label: "Sections (Building Section)" },
  ...leaves(["Section 1"]),
  { guides: ["line", "plus"], label: "Area Plans (Rentable)" },
  { guides: ["leaf"], label: "Legends", icon: "legends" },
  { guides: ["minus"], label: "Schedules/Quantities", icon: "legends" },
];

function GuideCell({ kind, tail }: { kind: Guide; tail: string }) {
  if (kind === "line") return <span className="h-[18px] w-5 shrink-0 border-l border-dotted border-[#999]" />;
  const toggle = kind === "plus" || kind === "minus";
  return (
    <span className={`relative h-[18px] shrink-0 ${tail}`}>
      <span className={`absolute top-0 left-0 border-l border-dotted border-[#999] ${kind === "last" ? "h-[10px]" : "h-[18px]"}`} />
      <span className="absolute top-[10px] right-[4px] left-0 border-t border-dotted border-[#999]" />
      {toggle && (
        <svg width="9" height="9" viewBox="0 0 9 9" className="absolute top-[6px] -left-1" aria-hidden="true">
          <rect x=".5" y=".5" width="8" height="8" fill="#fff" stroke="#919191" />
          <path d={kind === "plus" ? "M2 4.500h5M4.500 2v5" : "M2 4.500h5"} stroke="#33457a" />
        </svg>
      )}
    </span>
  );
}

function ProjectBrowser() {
  return (
    <section className="absolute top-[22px] right-[47px] flex h-[529px] w-[252px] flex-col border-t border-r-2 border-b-2 border-l border-t-[#e2e2e2] border-r-[#777] border-b-[#777] border-l-[#e2e2e2] bg-[#f7f7f7] pt-1 pr-[3px] pb-[3px] pl-[3px] text-xs text-black">
      <PaletteTitle title="Project Browser - govett street rvt.rvt" />
      <div className="flex min-h-0 flex-1 overflow-hidden border-t-2 border-l-2 border-[#666] bg-white">
        <ul className="min-w-0 flex-1 pl-2">
          {tree.map((row, i) => (
            <li key={i} className="flex h-[18px] items-center">
              {row.guides.map((g, n) => (
                <GuideCell key={n} kind={g} tail={row.icon ? "w-3" : "w-[18px]"} />
              ))}
              {row.icon && <span className="mr-[6px]"><Icon name={row.icon} /></span>}
              <span className={`whitespace-nowrap ${row.active ? "-ml-[3px] bg-[#e0e0e0] px-[3px] font-bold" : ""}`}>{row.label}</span>
            </li>
          ))}
        </ul>
        <div className="flex w-[15px] flex-col items-center bg-[#f0f0f0] pt-1">
          <Chevron dir="up" />
          <div className="mt-1 h-[367px] w-full bg-[#cdcdcd]" />
          <div className="mt-auto mb-1"><Chevron dir="down" /></div>
        </div>
      </div>
    </section>
  );
}

function NavigationBar() {
  return (
    <div className="absolute top-[28px] right-[14px] flex h-[118px] w-[33px] flex-col items-center rounded-r-md border-2 border-l-0 border-[#c4c4c4] bg-[#f3f3f3]">
      <svg width="33" height="114" viewBox="0 0 33 114" aria-label="Steering wheel and zoom">
        <g fill="none" stroke="#b0b0b0">
          <circle cx="26" cy="6" r="4" />
          <path d="M24 4l4 4M28 4l-4 4M24 108h4" />
          <circle cx="26" cy="108" r="4" />
        </g>
        <path d="M14 22h9v10a9 9 0 1 1-9-10z" fill="#eceef0" stroke="#9b9fa4" />
        <circle cx="14" cy="31" r="5" fill="#fff" stroke="#9b9fa4" />
        <path d="M13 50h6l-3 3zM13 92h6l-3 3z" fill="#8a8a8a" />
        <path d="M3 56.500h27" stroke="#bdbdbd" />
        <path d="M9 80V65h7l3 3v4M9 80h6" fill="none" stroke="#9b9fa4" />
        <circle cx="19" cy="76" r="3.500" fill="#fff" stroke="#8a9097" />
        <path d="M21 79l3 3" stroke="#8a9097" strokeWidth="2" />
        <text x="15" y="42" fontFamily="Lato, sans-serif" fontSize="9" fontWeight="bold" fill="#7f9cc4">2D</text>
      </svg>
    </div>
  );
}

const viewControls = [
  "detailLevel", "visualStyle", "sunOff", "shadowOff", "cropOff", "cropShow", "glasses", "bulb", "worksharing", "analytical",
];

function ViewControlBar() {
  return (
    <div className="flex h-[18px] shrink-0 items-center bg-[#eeeeee] pl-[21px] text-[11px] text-[#222]">
      <span className="w-[55px]">1 : 100</span>
      {viewControls.map((name) => (
        <button key={name} aria-label={name} className="w-[21px]">
          <Icon name={name} />
        </button>
      ))}
      <Chevron dir="left" />
      <div className="flex h-full flex-1">
        <div className="ml-[507px] h-4 w-[17px] bg-[#cccccc]" />
      </div>
      <span className="mr-4"><Chevron dir="right" /></span>
    </div>
  );
}

export default function App() {
  return (
    <div className="flex h-screen flex-col overflow-hidden bg-white font-[family-name:Lato,sans-serif]">
      <Header />
      <Ribbon />
      <main className="relative flex min-h-0 flex-1 flex-col">
        <div className="flex min-h-0 flex-1 overflow-hidden bg-white">
          <FloorPlanDrawing />
          <div className="ml-auto flex items-start gap-[6px] pt-2 pr-1">
            <svg width="13" height="12" viewBox="0 0 13 12" aria-label="Minimize view"><path d="M.5 5.500h11v3H.5z" fill="#fff" stroke="#555" /></svg>
            <svg width="12" height="12" viewBox="0 0 12 12" aria-label="Restore view"><path d="M.5 3.500h8v8h-8zM3 3V.5h8.500V9H9M3 6h3v3H3z" fill="none" stroke="#555" /></svg>
            <svg width="12" height="12" viewBox="0 0 12 12" aria-label="Close view"><path d="M1 1h3l2 3 2-3h3L8 6l3 5H8L6 8l-2 3H1l3-5z" fill="#fff" stroke="#555" /></svg>
          </div>
          <div className="flex w-3 shrink-0 flex-col items-center bg-[#efefef] pt-1">
            <Chevron dir="up" />
            <div className="mt-auto mb-[240px] h-[17px] w-full bg-[#cdcdcd]" />
            <div className="mb-1"><Chevron dir="down" /></div>
          </div>
        </div>
        <ViewControlBar />
        <div className="h-7 shrink-0 border-t border-b border-t-white border-b-[#8b8b8b] bg-[#dfe0e2]" />
        <footer className="flex h-[5px] shrink-0 overflow-hidden bg-[#e6e6e6] pt-[1px]">
          <div className="ml-[418px] flex w-[23px] justify-center bg-[#d6d6d6]"><span className="mt-[2px] h-1 w-[5px] bg-[#2e7d2e]" /></div>
          <div className="ml-1 w-[174px] border border-[#c4c8cc] bg-white" />
          <div className="ml-1 w-[44px] bg-[#d6d6d6]" />
          <div className="ml-[2px] flex w-5 justify-center bg-[#d2d4d6]"><span className="mt-[2px] h-1 w-3 bg-[#3a4556]" /></div>
          <div className="ml-[2px] w-5 bg-[#d6d6d6]" />
          <div className="ml-[2px] w-[132px] border border-[#c4c8cc] bg-white" />
          <div className="mr-[86px] ml-auto flex gap-[2px]">
            <span className="w-6 bg-[#d6d6d6]" />
            <span className="w-6 bg-[#d6d6d6]" />
            <span className="flex w-6 justify-center bg-[#d6d6d6]"><span className="mt-[1px] h-1 w-2 bg-[#b8323c]" /></span>
            <span className="w-6 bg-[#d6d6d6]" />
            <span className="w-6 bg-[#d6d6d6]" />
          </div>
        </footer>
        <NavigationBar />
        <PropertiesPalette />
        <ProjectBrowser />
      </main>
    </div>
  );
}
